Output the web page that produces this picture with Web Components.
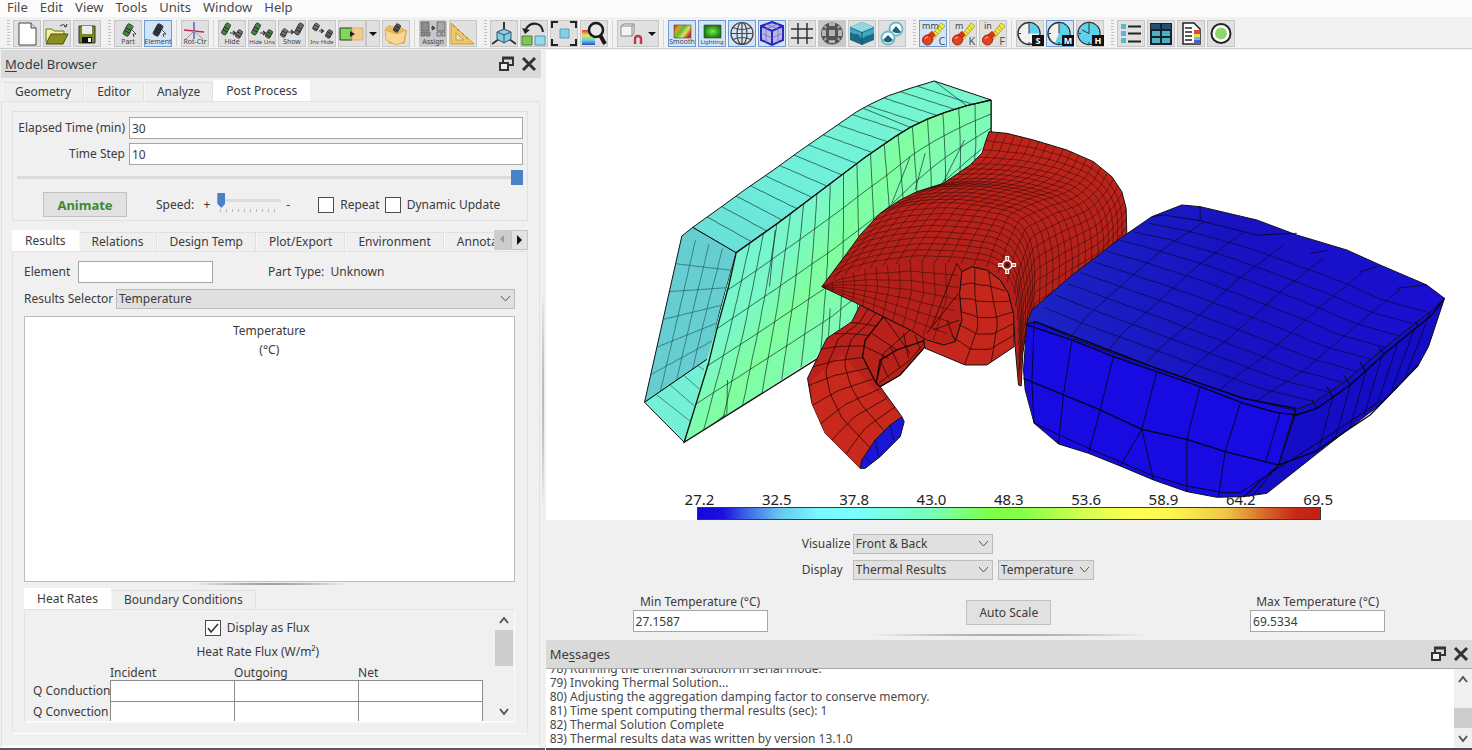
<!DOCTYPE html>
<html lang="en">
<head>
<meta charset="utf-8">
<title>Thermal Model Workbench</title>
<style>
  html, body { margin: 0; height: 100%; }
  body { font: 12px/16px "Noto Sans", "Open Sans", sans-serif; color: #3c3a3c; background: #f0f0f0; overflow: hidden; }
</style>
</head>
<body>
<thermal-app></thermal-app>
<script>
const define = (name, html) => {
  const tpl = document.createElement('template');
  customElements.define(name, class extends HTMLElement {
    connectedCallback() {
      if (this.shadowRoot) return;
      tpl.innerHTML = '<style>*{box-sizing:border-box}</style>' + (typeof html === 'function' ? html(this) : html);
      this.attachShadow({ mode: 'open' }).append(tpl.content.cloneNode(true));
    }
  });
};
const attr = (el, n, d = '') => el.getAttribute(n) ?? d;

/* ---------- toolbar icons, 28 x 27 ---------- */
const part = (x, y, c = '#555', w = 6, h = 12) =>
  `<g transform="translate(${x} ${y}) rotate(28)"><rect x="${-w / 2}" y="${-h / 2}" width="${w}" height="${h}" rx="1.5" fill="${c}" stroke="#333" stroke-width=".8"/><path d="M${-w / 2} -1h${w}M${-w / 2} 2h${w}" stroke="#222" stroke-width=".8"/></g>`;
const arrow = (x, y, l = 5) => `<path d="M${x} ${y}h${l}m-2-2l2.500 2-2.500 2" fill="none" stroke="#333" stroke-width="1.200"/>`;
const thermo = `<path d="M12 16L22 3l4 3-12 14z" fill="#f4ec3c" stroke="#99902a" stroke-width=".7"/><path d="M18 8l3 3M20 6l3 3M16 11l3 3" stroke="#a89c20" stroke-width=".8"/><path d="M8 19l7-6" stroke="#d23a1c" stroke-width="6"/><circle cx="8.500" cy="20" r="5" fill="#e04520" stroke="#9c2410"/><path d="M6 19q1-2 3-2" stroke="#f9b9a0" fill="none"/>`;
const clock = (slice, letter) => `<circle cx="13" cy="13.500" r="11" fill="#f0f2f4" stroke="#333" stroke-width="1.500"/>${slice}<path d="M13 3v10.500M3 13.500h2M13 22v2" stroke="#333"/><rect x="16" y="15" width="12" height="11" fill="#111"/><text x="22" y="24" font-size="9" font-weight="700" text-anchor="middle" fill="#fff">${letter}</text>`;
const ICONS = {
  'new': '<path d="M6 3h12l5 5v17H6z" fill="#fff" stroke="#444"/><path d="M18 3v5h5" fill="#ddd" stroke="#444"/>',
  open: '<path d="M3 22V9h6l2 2h10v4" fill="#f4f0a0" stroke="#6b6b20"/><path d="M3 24l5-10h17l-5 10z" fill="#8a8f22" stroke="#4b4e10"/><path d="M17 6q4-3 6 1m0 0l-2-1m2 1l1-3" fill="none" stroke="#333"/>',
  save: '<path d="M6 6h16v17H6z" fill="#7c8828" stroke="#333"/><path d="M9 6h10v8H9z" fill="#e9ecec"/><path d="M9 17h10v6H9z" fill="#111"/><path d="M15 18h3v4h-3z" fill="#eee"/>',
  part: part(14, 10, '#3f8a3a') + '<path d="M17 9l5 5-3 0 1 3" fill="#fff" stroke="#333" stroke-width=".9"/>',
  element: part(14, 10, '#334') + '<path d="M17 9l5 5-3 0 1 3" fill="#fff" stroke="#333" stroke-width=".9"/>',
  ref: '<path d="M13 2v17" stroke="#5a60c8" stroke-width="1.500"/><path d="M3 10l20 2" stroke="#b83050" stroke-width="1.500"/><path d="M13 11l-8 8M13 11l9 8" stroke="#999"/>',
  hide: part(8, 9, '#3f8a3a', 5, 12) + arrow(12, 13) + part(21, 14, '#777', 5, 8),
  hideuns: part(8, 9, '#3f8a3a', 5, 12) + arrow(12, 13) + part(21, 14, '#3f8a3a', 5, 8),
  show: part(6, 13, '#777', 5, 8) + arrow(10, 12) + part(21, 9, '#666', 5, 12),
  invhide: part(8, 7, '#777', 5, 7) + arrow(11, 11, 4) + part(21, 14, '#666', 5, 8),
  split: '<path d="M2 8h12v12H2z" fill="#7ed957" stroke="#333"/><path d="M14 8h11v12H14z" fill="#f0cc8c" stroke="#d8b070"/><path d="M12 11l5 3-5 3z" fill="#222"/>',
  folder: '<path d="M3 8l4-3 14 3 4 3-2 13-16 0z" fill="#e8b964"/><path d="M3 10l12 4 9-4-2 12-8 3-10-5z" fill="#f6d794" stroke="#d39c42" stroke-width=".7"/>' + part(15, 8, '#555', 5, 8),
  assign: '<g fill="#8c8c8c" stroke="#666" stroke-width=".8"><path d="M2 2h8v9H2zM2 12h4v4H2zM7 12h4v4H7z"/><path d="M18 2h8v9h-8z" fill="#a8a8a8"/><path d="M18 12h4v4h-4zM23 12h3v4h-3z" fill="#b8b8b8"/></g>' + arrow(12, 8, 3),
  triangle: '<path d="M2 3v21h23z" fill="#efc766" stroke="#c99c3a"/><path d="M7 13v7h8z" fill="#e4e4e4" stroke="#c99c3a"/><path d="M4 5l2 2M8 9l2 2M13 13l2 2M17 17l2 2" stroke="#9b7624"/>',
  cube: '<path d="M14 2v8M2 24l7-5M26 24l-7-5" stroke="#333" stroke-width="2"/><path d="M14 9l7 3v7l-7 4-7-4v-7z" fill="#82cfe4" stroke="#37566b"/><path d="M7 12l7 3 7-3M14 15v8" fill="none" stroke="#37566b"/>',
  rotate: '<path d="M5 11Q9 2 17 4q5 1 6 8" fill="none" stroke="#222" stroke-width="2"/><path d="M2 8l3 6 5-4z" fill="#222"/><path d="M2 16h10v9H2z" fill="#7ec850" stroke="#4f7b34"/><path d="M15 16h10v9H15z" fill="#9bd8ee" stroke="#5b93a8"/>',
  fit: '<path d="M2 8V2h6M20 2h6v6M26 19v6h-6M8 25H2v-6" fill="none" stroke="#222" stroke-width="2"/><path d="M10 9h9v9h-9z" fill="#85d0e6" stroke="#5aa0b6"/>',
  zoom: '<defs><linearGradient id="zg" x1="0" y1="0" x2="0" y2="1"><stop offset="0" stop-color="#d84030"/><stop offset=".35" stop-color="#f0e060"/><stop offset=".7" stop-color="#60d0d8"/><stop offset="1" stop-color="#3048c8"/></linearGradient></defs><path d="M2 10h13v15H2z" fill="url(#zg)"/><circle cx="16" cy="10" r="7" fill="#e7e7e7" stroke="#181818" stroke-width="2.500"/><path d="M20 15l5 9" stroke="#181818" stroke-width="4"/>',
  magnet: '<path d="M4 6l3-2h10v9l-2 3H4z" fill="#f4f4f4" stroke="#888"/><path d="M4 6h11v10M15 6l2-2" fill="none" stroke="#888"/><path d="M18 24v-5q0-3 3-3t3 3v5" fill="none" stroke="#c23a4e" stroke-width="2.500"/><path d="M31 12h8l-4 4z" fill="#111"/>',
  smooth: '<defs><linearGradient id="sg" x2="1" y2=".6"><stop stop-color="#d83020"/><stop offset=".3" stop-color="#e0a020"/><stop offset=".5" stop-color="#50c030"/><stop offset=".75" stop-color="#e0e060"/><stop offset="1" stop-color="#d03020"/></linearGradient></defs><path d="M6 5h17v13H6z" fill="url(#sg)" stroke="#444" stroke-width=".6"/>',
  lighting: '<defs><radialGradient id="lg"><stop stop-color="#70f040"/><stop offset="1" stop-color="#1c7c18"/></radialGradient></defs><path d="M6 5h17v13H6z" fill="url(#lg)" stroke="#333" stroke-width=".6"/>',
  globe: '<g fill="none" stroke="#444" stroke-width="1.200"><circle cx="14" cy="13.500" r="11"/><ellipse cx="14" cy="13.500" rx="5" ry="11"/><path d="M14 2v23M3 13.500h22M5 7.500q9 4 18 0M5 19.500q9-4 18 0"/></g>',
  wirecube: '<path d="M14 2l11 4v14l-11 5L3 20V6z" fill="#b9b9e2" stroke="#2b24c4" stroke-width="2"/><path d="M3 6l11 5 11-5M14 11v14" fill="none" stroke="#2b24c4" stroke-width="2"/><path d="M8 8v15M20 8v15M3 13l11 5 11-5M8 4l12 5M20 4L8 9" fill="none" stroke="#6d68c8" stroke-width=".8"/>',
  grid: '<path d="M10 3v21M19 3v21M3 9h22M3 18h22" stroke="#333" stroke-width="1.500"/>',
  ball: '<circle cx="14" cy="13.500" r="11" fill="#555"/><g fill="#b4b4b4"><path d="M11 10h6v6h-6zM11 3h6v3h-6zM11 20h6v3h-6zM4 10h4v6H4zM20 10h4v6h-4zM6 5l3 2-2 2zM22 5l-3 2 2 2zM6 21l3-2-2-2zM22 21l-3-2 2-2z"/></g>',
  box: '<path d="M14 2l12 5v13l-12 5L2 20V7z" fill="#1d6a88"/><path d="M14 2l12 5-12 5L2 7z" fill="#8fd8e0"/><path d="M2 8l12 5 12-5v5l-4 2-4 1-4 3-4-5-4 0-4-2z" fill="#3fa8bd"/><path d="M14 12v13" stroke="#124c66"/>',
  swap: '<circle cx="18" cy="9" r="6.500" fill="#fff" stroke="#69bccb" stroke-width="2"/><path d="M14 11l4-5 5 6q-4 3-9-1z" fill="#245f74"/><circle cx="10" cy="18" r="6.500" fill="#fff" stroke="#69bccb" stroke-width="2"/><path d="M5 20l5-5 5 5q-5 5-10 0z" fill="#245f74"/>',
  c: thermo + '<text x="23" y="25" font-size="11" text-anchor="middle" fill="#555">C</text><text x="3" y="9" font-size="9" fill="#444">mm</text>',
  k: thermo + '<text x="23" y="25" font-size="11" text-anchor="middle" fill="#555">K</text><text x="6" y="9" font-size="9" fill="#444">m</text>',
  f: thermo + '<text x="23" y="25" font-size="11" text-anchor="middle" fill="#555">F</text><text x="5" y="9" font-size="9" fill="#444">in</text>',
  s: clock('<path d="M13 13.500V3a10.500 10.500 0 0 1 10.500 10.500z" fill="#5bd3ea"/>', 'S'),
  m: clock('<path d="M13 13.500V3a10.500 10.500 0 0 1 0 21l-4-1z" fill="#5bd3ea"/>', 'M'),
  h: clock('<circle cx="13" cy="13.500" r="10.500" fill="#5bd3ea"/><path d="M13 13.500L6 10" stroke="#333"/>', 'H'),
  list: '<path d="M4 4h5v5H4zM4 11h5v5H4zM4 18h5v5H4z" fill="#5cb8c8"/><path d="M11 6.500h13M11 13.500h13M11 21.500h13" stroke="#222" stroke-width="2"/>',
  table: '<path d="M4 4h20v20H4z" fill="#4fb0c4" stroke="#16222e" stroke-width="2"/><path d="M4 4h20v5H4z" fill="#1d4e74"/><path d="M14 4v20M4 10h20M4 17h20" stroke="#16222e" stroke-width="2"/>',
  report: '<path d="M6 3h11l6 6v15H6z" fill="#fff" stroke="#222" stroke-width="1.500"/><path d="M8 8h7M8 12h7M8 16h7M8 20h7" stroke="#222" stroke-width="1.500"/><path d="M17 10h6v4h-6z" fill="#d84a38"/><path d="M17 14h6v3h-6z" fill="#f0d850"/><path d="M17 17h6v3h-6z" fill="#5cc8d0"/><path d="M17 20h6v4h-6z" fill="#5458c8"/>',
  record: '<circle cx="14" cy="13.500" r="9.500" fill="#fff" stroke="#222" stroke-width="2"/><circle cx="14" cy="13.500" r="6" fill="#8fd46c"/>',
  drop: '<path d="M3 12h8l-4 4z" fill="#111"/>'
};

define('tool-button', el => {
  const w = +attr(el, 'w', 28), cap = attr(el, 'caption');
  return `<style>
    :host { display: block; flex: none; }
    button { position: relative; display: block; width: ${w}px; height: 27px; padding: 0; border: 1px solid #c6c6c6; background: #e0e0e0; color: #444; font: 7px/10px "Noto Sans", sans-serif; }
    :host([on]) button { background: #d3e4f7; border-color: #6f9bd0; }
    :host([pressed]) button { background: #c8c8c8; border-color: #c8c8c8; }
    :host([joined]) { margin-left: -2px; }
    svg { display: block; margin: -1px; font-family: "Noto Sans", sans-serif; }
    span { position: absolute; left: -4px; right: -4px; bottom: -1px; text-align: center; white-space: nowrap; }
    span.long { font-size: 6px; }
  </style><button type="button" title="${attr(el, 'name')}" aria-label="${attr(el, 'name')}"><svg width="${w}" height="27" viewBox="0 0 ${w} 27">${ICONS[attr(el, 'icon')]}</svg>${cap ? `<span class="${cap.length > 7 ? 'long' : ''}">${cap}</span>` : ''}</button>`;
});

define('tool-sep', `<style>
  :host { display: block; flex: none; width: 5px; height: 27px; }
  :host::before { content: ""; display: block; width: 1px; height: 27px; margin-left: 2px; background: #d6d6d6; }
  :host([grip]) { width: 9px; }
  :host([grip])::before { width: 3px; margin-left: 5px; background: repeating-linear-gradient(#c2c2c2 0 1px, transparent 1px 3px); }
</style>`);

define('tool-bar', () => {
  const b = (icon, name, extra = '') => `<tool-button icon="${icon}" name="${name}" ${extra}></tool-button>`;
  const sep = '<tool-sep></tool-sep>', grip = '<tool-sep grip></tool-sep>';
  return `<style>
    :host { display: flex; gap: 2px; height: 32px; padding: 3px 2px 1px; background: #f2f2f2; border-bottom: 1px solid #cfcfcf; }
  </style>` +
  grip + b('new', 'New') + b('open', 'Open') + b('save', 'Save') + grip +
  b('part', 'Select part', 'caption="Part"') + b('element', 'Select element', 'caption="Element" on') + sep +
  b('ref', 'Rotation center', 'caption="Rot-Ctr"') + sep +
  b('hide', 'Hide', 'caption="Hide"') + b('hideuns', 'Hide unselected', 'caption="Hide Uns"') + b('show', 'Show', 'caption="Show"') +
  b('invhide', 'Invert hide', 'caption="Inv Hide"') + b('split', 'Split view') + b('drop', 'Split view options', 'w="14" joined') + b('folder', 'Part folder') + sep +
  b('assign', 'Assign', 'caption="Assign" pressed') + b('triangle', 'Measure') + grip +
  b('cube', 'Axes view') + b('rotate', 'Rotate') + b('fit', 'Fit') + b('zoom', 'Zoom') + sep + b('magnet', 'Snap', 'w="42"') + sep +
  b('smooth', 'Smooth', 'caption="Smooth" on') + b('lighting', 'Lighting', 'caption="Lighting" on') + b('globe', 'Globe', 'on') + b('wirecube', 'Mesh edges', 'on') +
  b('grid', 'Grid') + b('ball', 'Environment', 'pressed') + b('box', 'Ground') + b('swap', 'Swap') + grip +
  b('c', 'Millimetres, Celsius', 'on') + b('k', 'Metres, Kelvin') + b('f', 'Inches, Fahrenheit') + sep +
  b('s', 'Seconds') + b('m', 'Minutes', 'on') + b('h', 'Hours') + grip +
  b('list', 'List') + b('table', 'Table') + b('report', 'Report') + b('record', 'Record');
});

define('menu-bar', `<style>
  :host { display: block; background: #fcfcfc; }
  nav { display: flex; height: 17px; padding-left: 1px; }
  button { border: 0; background: none; padding: 0 6px; font: 13px/14px "Noto Sans", sans-serif; color: #4a484a; height: 14px; }
</style><nav aria-label="Main menu">${['File', 'Edit', 'View', 'Tools', 'Units', 'Window', 'Help'].map(t => `<button type="button">${t}</button>`).join('')}</nav>`);

define('dock-panel', `<style>
  :host { display: flex; flex-direction: column; min-height: 0; min-width: 0; }
  header { display: flex; align-items: center; height: 28px; padding: 0 0 0 4px; background: #dadada; flex: none; }
  h2 { flex: 1; margin: 0; font: 13px/18px "Noto Sans", sans-serif; }
  button { display: block; width: 23px; height: 18px; padding: 0; border: 0; background: none; }
  svg { display: block; margin: 0 auto; }
</style><header><h2><slot name="title"></slot></h2>
<button type="button" aria-label="Float"><svg width="16" height="16" viewBox="0 0 16 16"><path d="M5 2h10v7h-4M5 2v4" fill="none" stroke="#333" stroke-width="2"/><path d="M4 2h12" stroke="#333" stroke-width="3"/><path d="M2 7h8v7H2z" fill="#eee" stroke="#333" stroke-width="2"/></svg></button>
<button type="button" aria-label="Close"><svg width="16" height="16" viewBox="0 0 16 16"><path d="M2 2l12 12M14 2L2 14" stroke="#333" stroke-width="3"/></svg></button>
</header><slot></slot>`);

define('tab-strip', el => `<style>
  :host { display: flex; align-items: flex-end; height: 21px; overflow: hidden; flex: none; }
  div { display: flex; align-items: flex-end; flex: 1; min-width: 0; overflow: hidden; }
  button { flex: none; height: 19px; padding: 0 var(--pad, 12px); border: 1px solid #e0e0e0; border-left-color: #f8f8f8; border-bottom: 0; background: #efefef; font: inherit; color: inherit; white-space: nowrap; }
  button[aria-selected=true] { height: 21px; background: #fff; border-color: #fff; }
  .nav button { width: 17px; height: 20px; padding: 0; border: 1px solid #c4c4c4; background: #e2e2e2; }
  .nav { flex: none; align-self: flex-start; }
  .nav button:first-child { background: #cdcdcd; border-color: #cdcdcd; }
  .nav svg { display: block; margin: 0 auto; }
</style><div role="tablist">${attr(el, 'tabs').split('|').map((t, i) => `<button type="button" role="tab" aria-selected="${i === +attr(el, 'active', 0)}">${t}</button>`).join('')}</div>
${el.hasAttribute('scroll') ? `<div class="nav"><button type="button" aria-label="Previous tabs"><svg width="10" height="10"><path d="M7 0v8L3 4z" fill="#999"/></svg></button><button type="button" aria-label="Next tabs"><svg width="10" height="12"><path d="M3 1v10l5-5z" fill="#111"/></svg></button></div>` : ''}`);

define('text-field', el => `<style>
  :host { display: flex; align-items: center; }
  :host([stacked]) { flex-direction: column; align-items: center; }
  label { flex: none; width: var(--label, auto); text-align: var(--align, right); padding-right: 4px; white-space: nowrap; }
  :host([stacked]) label { padding: 0; text-align: center; }
  input { width: var(--field, auto); flex: var(--grow, 1); min-width: 0; height: 22px; padding: 0 2px; border: 1px solid #a6a6a6; border-radius: 0; background: #fff; font: inherit; color: inherit; }
  :host([stacked]) input { flex: none; }
</style><label for="f">${attr(el, 'label')}</label><input id="f" type="text" value="${attr(el, 'value')}">`);

define('combo-box', el => `<style>
  :host { display: flex; align-items: center; }
  label { flex: none; width: var(--label, auto); white-space: nowrap; }
  .box { position: relative; flex: var(--grow, 1); width: var(--field, auto); }
  select { display: block; width: 100%; height: 20px; padding: 0 16px 0 2px; appearance: none; border: 1px solid #bcbcbc; border-radius: 0; background: #e0e0e0; font: inherit; color: inherit; }
  svg { position: absolute; right: 4px; top: 6px; pointer-events: none; }
</style>${attr(el, 'label') ? `<label for="s">${attr(el, 'label')}</label>` : ''}<div class="box"><select id="s" aria-label="${attr(el, 'label', 'Display quantity')}"><option>${attr(el, 'value')}</option></select><svg width="11" height="8" viewBox="0 0 11 8"><path d="M1 1l4.500 5 4.500-5" fill="none" stroke="#555"/></svg></div>`);

define('check-box', el => `<style>
  :host { display: block; }
  label { display: flex; align-items: center; gap: 6px; white-space: nowrap; }
  input { appearance: none; flex: none; width: 16px; height: 16px; margin: 0; border: 1px solid #4c4c4c; background: #fff; }
  .b { position: relative; display: block; height: 16px; }
  svg { position: absolute; left: 2px; top: 2px; pointer-events: none; display: none; }
  input:checked + svg { display: block; }
</style><label><span class="b"><input type="checkbox" ${el.hasAttribute('checked') ? 'checked' : ''}><svg width="12" height="12"><path d="M1 6l3 4 7-8" fill="none" stroke="#333" stroke-width="1.500"/></svg></span>${attr(el, 'label')}</label>`);

define('range-slider', el => `<style>
  :host { display: block; }
  input { appearance: none; display: block; width: 100%; height: 17px; margin: 0; background: linear-gradient(#dcdcdc, #dcdcdc) center / 100% 3px no-repeat; }
  input::-webkit-slider-thumb { appearance: none; width: 12px; height: 15px; background: #4a82c8; border: 0; border-radius: 0; }
  :host([pointed]) input::-webkit-slider-thumb { width: 8px; height: 15px; clip-path: polygon(0 0, 100% 0, 100% 72%, 50% 100%, 0 72%); }
  :host([pointed])::after { content: ""; display: block; height: 3px; margin: 0 3px; background: repeating-linear-gradient(90deg, #b8b8b8 0 1px, transparent 1px 6px); }
</style><input type="range" aria-label="${attr(el, 'label')}" min="0" max="100" value="${attr(el, 'value')}">`);

define('scroll-rail', `<style>
  :host { display: flex; flex-direction: column; justify-content: space-between; width: 18px; flex: none; background: #f0f0f0; }
  button { width: 18px; height: 20px; padding: 0; border: 0; background: none; flex: none; }
  svg { display: block; margin: 0 auto; }
  i { flex: none; height: var(--thumb); background: #cdcdcd; }
  .a { flex: var(--before, 0); } .z { flex: var(--after, 1); }
</style><button type="button" aria-label="Scroll up"><svg width="12" height="9"><path d="M2 7l4-5 4 5" fill="none" stroke="#555" stroke-width="2"/></svg></button><span class="a"></span><i></i><span class="z"></span><button type="button" aria-label="Scroll down"><svg width="12" height="9"><path d="M2 2l4 5 4-5" fill="none" stroke="#555" stroke-width="2"/></svg></button>`);

define('time-controls', `<style>
  :host { display: block; padding: 5px 4px 3px; border: 1px solid #e0e0e0; }
  text-field { --label: 112px; margin-bottom: 4px; }
  .track { margin: 2px 0 6px; }
  .row { display: flex; align-items: center; height: 25px; padding-left: 26px; white-space: nowrap; }
  button { width: 84px; height: 25px; margin-right: 29px; border: 1px solid #c0c0c0; background: #e1e1e1; color: #3c8a30; font: bold 13px/16px "Noto Sans", sans-serif; }
  .speed { width: 64px; margin: 0 5px 0 7px; align-self: flex-start; }
  .repeat { margin: 0 5px 0 28px; }
</style>
<text-field label="Elapsed Time (min)" value="30"></text-field>
<text-field label="Time Step" value="10"></text-field>
<range-slider class="track" label="Time" value="100"></range-slider>
<div class="row"><button type="button">Animate</button><span>Speed:&nbsp;&nbsp; +</span><range-slider pointed class="speed" label="Speed" value="0"></range-slider><span>-</span>
<check-box class="repeat" label="Repeat"></check-box><check-box label="Dynamic Update"></check-box></div>`);

define('heat-rates', `<style>
  :host { display: flex; height: 114px; padding-right: 1px; border: 1px solid #e2e2e2; border-bottom: 2px solid #fbfbfb; border-right-color: #fbfbfb; flex: none; }
  .view { flex: 1; overflow: hidden; padding: 10px 12px 0 8px; }
  check-box { width: 106px; margin: 0 auto; }
  table { width: 100%; border-collapse: collapse; table-layout: fixed; }
  caption { box-sizing: content-box; height: 16px; line-height: 16px; padding: 8px 0 6px; }
  th { font-weight: normal; text-align: left; padding: 0; white-space: nowrap; line-height: 14px; }
  thead th { height: 14px; }
  col:first-child { width: 77px; }
  td { padding: 0; height: 21px; border: 1px solid #8c8c8c; background: #fff; }
  input { display: block; width: 100%; height: 20px; border: 0; padding: 0 3px; font: inherit; background: #fff; }
</style><div class="view"><check-box label="Display as Flux" checked></check-box>
<table><caption>Heat Rate Flux (W/m²)</caption><colgroup><col><col><col><col></colgroup>
<thead><tr><th></th><th scope="col">Incident</th><th scope="col">Outgoing</th><th scope="col">Net</th></tr></thead>
<tbody>${['Q Conduction', 'Q Convection'].map(r => `<tr><th scope="row">${r}</th>${['Incident', 'Outgoing', 'Net'].map(c => `<td><input aria-label="${r} ${c}"></td>`).join('')}</tr>`).join('')}</tbody></table></div>
<scroll-rail style="--thumb:36px"></scroll-rail>`);

define('model-browser', `<style>
  :host { display: block; height: 100%; min-height: 0; }
  dock-panel { height: 100%; }
  u { text-decoration-thickness: 1px; text-underline-offset: 2px; }
  .top { margin: 2px 0 0 1px; --pad: 12px; }
  .page { flex: 1; min-height: 0; display: flex; flex-direction: column; margin: 0 1px 0 0; padding: 9px 11px 11px 10px; border: 1px solid #e2e2e2; border-bottom: 3px solid #fafafa; }
  .sub { margin-top: 9px; }
  .results { flex: 1; min-height: 0; display: flex; flex-direction: column; padding: 9px 12px 10px 11px; border: 1px solid #e4e4e4; border-bottom-color: #fff; }
  .line { display: flex; align-items: center; gap: 55px; margin-bottom: 6px; }
  .el { --label: 54px; --align: left; --field: 135px; --grow: none; }
  .sel { --label: 92px; }
  .plot { flex: 1; min-height: 40px; margin-top: 7px; padding-top: 4px; border: 1px solid #bcbcbc; background: #fff; text-align: center; line-height: 19px; }
  .grab { height: 6px; padding-top: 1px; flex: none; }
  .grab::before { content: ""; display: block; width: 36%; height: 2px; margin: 0 auto; background: radial-gradient(closest-side, #555, transparent); }
</style>
<dock-panel><span slot="title"><u>M</u>odel Browser</span>
<tab-strip class="top" tabs="Geometry|Editor|Analyze|Post Process" active="3"></tab-strip>
<section class="page"><time-controls></time-controls>
<tab-strip class="sub" tabs="Results|Relations|Design Temp|Plot/Export|Environment|Annotations" active="0" scroll></tab-strip>
<div class="results"><div class="line"><text-field class="el" label="Element"></text-field><span>Part Type:&nbsp; Unknown</span></div>
<combo-box class="sel" label="Results Selector" value="Temperature"></combo-box>
<div class="plot">Temperature<br>(°C)</div><div class="grab"></div>
<tab-strip tabs="Heat Rates|Boundary Conditions" active="0"></tab-strip><heat-rates></heat-rates></div></section></dock-panel>`);

/* ---------- mesh geometry ---------- */
const along = pts => {
  const d = [0];
  for (let i = 1; i < pts.length; i++) d.push(d[i - 1] + Math.hypot(pts[i][0] - pts[i - 1][0], pts[i][1] - pts[i - 1][1]));
  return t => {
    const s = t * d[d.length - 1];
    let i = 1;
    while (i < pts.length - 1 && d[i] < s) i++;
    const k = (s - d[i - 1]) / (d[i] - d[i - 1]);
    return [0, 1].map(a => pts[i - 1][a] + (pts[i][a] - pts[i - 1][a]) * k);
  };
};
const P = s => s.trim().split(/\s+/).map(p => p.split(',').map(Number));
/* Coons patch: c0/c1 run in u, d0/d1 run in v */
const patch = (c0, c1, d0, d1, nu, nv) => {
  [c0, c1, d0, d1] = [c0, c1, d0, d1].map(c => along(P(c)));
  const S = (u, v) => [0, 1].map(a => (1 - v) * c0(u)[a] + v * c1(u)[a] + (1 - u) * d0(v)[a] + u * d1(v)[a]
    - ((1 - u) * (1 - v) * c0(0)[a] + u * (1 - v) * c0(1)[a] + (1 - u) * v * c1(0)[a] + u * v * c1(1)[a]));
  const n = 24, out = [];
  const line = f => 'M' + Array.from({ length: n + 1 }, (_, i) => f(i / n).map(Math.round).join(' ')).join('L');
  for (let i = 1; i < nu; i++) out.push(line(t => S(i / nu, t)));
  for (let j = 1; j < nv; j++) out.push(line(t => S(t, j / nv)));
  return out.join('');
};
const poly = (pts, fill, w = 3) => `<polygon points="${pts}" fill="${fill}" stroke="#111" stroke-width="${w}" stroke-linejoin="round"/>`;
const mesh = (d, c = '#0c2a24', w = 2) => `<path d="${d}" fill="none" stroke="${c}" stroke-width="${w}"/>`;

const ductOuter = '188,472 270,413 350,355 430,300 510,242 600,180 680,125 720,103 775,77 840,55 912,33';
const ductEdge = '318,548 445,458 575,360 705,262 795,200 840,172 890,148 945,127 1010,107 1083,90';
const ductEdgeR = ductEdge.split(' ').reverse().join(' ');
const ductFront = ductEdge + ' 1083,190 900,500 700,740 660,755 595,800 560,862 162,1117';
const duct = `<g transform="translate(84 20) scale(.3333)">` +
  poly('155,498 188,472 318,548 270,720 235,865 43,997', '#66cdd0') +
  mesh(patch('188,472 235,500 318,548', '43,997 140,930 235,865', '155,498 100,750 43,997', '318,548 270,720 235,865', 4, 6), '#1d5a60') +
  poly('43,997 235,865 220,930 162,1117', '#74f0d6') +
  mesh('M80 975L188 1060M120 945L195 1010M160 915L210 960M200 885L222 900', '#1d5a60') +
  `<polygon points="${ductFront}" fill="url(#gd)"/>` +
  `<clipPath id="cf"><polygon points="${ductFront}"/></clipPath><g clip-path="url(#cf)">` +
  mesh(patch(ductEdge, '162,1117 595,845 790,690 930,480 1070,300', '318,548 290,660 240,850 162,1117', '1083,90 1083,190 1070,300', 18, 5)) +
  mesh('M435 480L418 650M1003 210L935 345M885 250L855 360M840 260L785 400M600 715L595 800M292 930L290 1030L240 1070') + '</g>' +
  poly(ductOuter + ' 1083,90 ' + ductEdgeR, 'url(#gt)') +
  mesh(patch(ductOuter, ductEdge, '188,472 318,548', '912,33 1083,90', 16, 1)) +
  mesh('M700 115L840 172M912 33L1010 107') +
  mesh('M' + ductEdge.split(' ').join('L') + 'M318 548L295 650L262 770L235 880L162 1117L595 845M1083 90V190', '#111', 4) + '</g>';

const body = '567,35 620,40 700,60 800,90 880,125 935,170 965,215 978,265 980,345 900,450 700,585 680,620 668,700 663,798 655,795 645,680 640,580 625,520 600,480 560,450 515,440 485,455 478,520 485,600 465,665 430,675 380,660 330,630 180,555 65,500 140,400 180,345 240,280 300,240 350,215 430,190 510,135 545,100 558,60';
const ring = '65,500 120,468 200,445 330,425 470,430 560,440 610,470 640,520 652,620 655,795';
const red = `<g transform="translate(254 70) scale(.3333)">` +
  poly('180,555 155,605 80,655 22,775 35,850 75,940 180,1045 225,960 305,890 240,800 300,765 375,680 385,660 330,630', '#b9221b') +
  `<polygon points="35,780 125,705 215,800 305,890 225,960 180,1045 75,940 35,850" fill="#c9281c"/>` +
  mesh(patch('180,555 155,605 80,655 22,775 35,850 75,940 180,1045', '250,590 195,660 187,710 225,790 305,890', '180,555 250,590', '180,1045 225,960 305,890', 10, 3), '#2a0806', 2.5) +
  mesh('M330 630L250 700L228 790M250 590L330 700M215 640L290 690M195 680L265 715M375 665L330 720L235 790M345 645L360 690M310 640L325 715M270 680L300 745M240 720L265 775', '#2a0806', 2.5) +
  mesh('M375 680L300 765L240 800L228 790M380 660L290 690L240 720L228 790M250 590L195 660L187 710L228 790', '#160403', 4) +
  poly('180,1045 185,1020 225,960 270,915 305,890 312,905 300,950 240,1010 195,1045', '#1a16d8') +
  mesh('M225 960L235 1010M270 915L280 960M195 1010L210 1030', '#05052c') +
  poly('485,455 515,440 560,450 600,480 625,520 640,580 642,680 560,735 495,735 375,685 370,655 465,665 485,600 478,520', '#c6271c') +
  `<clipPath id="cb"><polygon points="${body}"/></clipPath>` + poly(body, 'url(#gr)') + '<g clip-path="url(#cb)">' +
  '<g opacity=".75">' + mesh(patch(ring, '567,35 700,60 800,90 880,125 935,170 965,215 978,265 980,345', '65,500 140,400 240,280 350,215 430,190 510,135 545,100 567,35', '655,795 668,700 700,585 900,450 980,345', 23, 25), '#2a0806') +
  mesh(patch('65,500 120,468 200,445 330,425 470,430', '65,500 180,555 330,630 430,675', '65,500 66,501', '470,430 475,540 430,675', 12, 7), '#2a0806') + '</g>' +
  mesh('M470 430L395 620M470 430L485 455M475 520L380 640M478 600L400 630M440 600L465 665', '#2a0806', 2.5) + '</g>' +
  mesh(patch('485,455 515,440 560,450 600,480', '430,680 495,735 560,735 642,680', '485,455 478,520 485,600 430,680', '600,480 640,580 642,680', 3, 6), '#2a0806', 2.5) +
  '</g>';

const blueTop = '515,45 570,50 740,90 860,135 1010,180 1110,225 1250,285 1303,325 1265,360 1120,475 1010,570 915,635 855,660 700,625 440,535 310,490 190,445 75,395 50,400 65,360 180,260 330,145 425,80';
const blueFront = '50,400 75,395 190,445 310,490 440,535 700,625 855,660 805,825 700,920 620,922 530,905 430,870 330,828 235,790 145,762 72,700 45,600 40,540';
const blueSide = '855,660 915,635 1010,570 1120,475 1265,360 1303,325 1255,470 1225,525 1115,640 960,760 770,910 700,920 805,825';
const blue = `<g transform="translate(464 140) scale(.3333)">` +
  poly(blueFront, '#180be2') + poly(blueSide, '#150cc6') + poly(blueTop, 'url(#gb)') +
  '<g opacity=".8">' + mesh(patch('460,75 570,92 740,135 900,190 1050,245 1160,295 1290,330', '75,395 190,445 440,535 700,625 855,660', '460,75 330,150 180,275 110,340 75,395', '1290,330 1120,475 1010,570 855,660', 7, 10), '#06062e', 2.5) + '</g>' +
  mesh('M425 80L460 75L570 92L740 135L860 130M900 190L950 182M1050 245L1100 230M1160 295L1250 285M570 50V92', '#06062e', 2.5) +
  mesh('M50 405L190 452L310 500L440 545L570 590L700 640L800 668L860 675L920 655L1020 585L1130 485L1265 375L1303 325M75 395L440 535L700 625L855 655', '#030318', 4) +
  mesh('M40 565L160 615L270 660L395 718L530 748L645 785L805 825L915 785L1080 675L1225 525', '#030318', 4) +
  mesh('M72 395L65 575L72 700M185 452L160 615L145 762M310 498L270 660L235 790M440 545L395 718L330 828M395 718L430 870M570 590L530 748L530 905M692 635L645 785L625 920M810 668L765 820M855 675L805 825L700 920M805 825L730 915', '#05052c', 3) +
  mesh('M72 700L235 775L430 858L530 888L640 908L690 908L780 850L960 735L1115 630', '#05052c', 3) +
  mesh(patch('915,655 1020,585 1130,485 1225,405 1303,325', '880,800 1000,730 1130,615 1225,525', '915,655 880,800', '1303,325 1225,525', 8, 1), '#05052c', 2.5) +
  mesh('M850 650L860 675M905 630L920 655M950 590L970 625M1000 555L1020 585M1050 515L1065 545M1105 470L1125 495M1215 395L1225 412', '#030318', 3) + '</g>';

define('mesh-view', `<style>
  :host { display: block; }
  svg { display: block; width: 100%; height: 100%; }
</style><svg viewBox="0 0 926 470" preserveAspectRatio="xMidYMax meet" role="img" aria-label="Thermal mesh model"><defs>
<linearGradient id="gd" gradientUnits="userSpaceOnUse" x1="330" y1="465" x2="760" y2="765"><stop offset="0" stop-color="#72f4d4"/><stop offset=".3" stop-color="#7af8c8"/><stop offset=".52" stop-color="#80ff9e"/><stop offset=".7" stop-color="#80fcb0"/><stop offset="1" stop-color="#7cfac0"/></linearGradient>
<linearGradient id="gt" x1="0" y1="1" x2="1" y2="0"><stop offset="0" stop-color="#68dcd8"/><stop offset=".4" stop-color="#70f0da"/><stop offset="1" stop-color="#78f8cc"/></linearGradient>
<linearGradient id="gr" x1="0" y1="0" x2="0" y2="1"><stop offset="0" stop-color="#c0241b"/><stop offset=".5" stop-color="#b4211a"/><stop offset="1" stop-color="#b8221b"/></linearGradient>
<linearGradient id="gb" x1="0" y1=".5" x2="1" y2=".5"><stop offset="0" stop-color="#1c24c2"/><stop offset=".5" stop-color="#1812c2"/><stop offset="1" stop-color="#1a0fd2"/></linearGradient></defs>
${duct}${red}${blue}
<g transform="translate(461 215)"><path d="M0-9V-3M0 3V9M-9 0h6M3 0h6" stroke="#fff" stroke-width="4"/><path d="M0-8V-3M0 3V8M-8 0h5M3 0h5" stroke="#7a1a14" stroke-width="1"/><circle r="4.500" fill="#a01c14" stroke="#fff" stroke-width="1.500"/><circle r="2" fill="#301010"/></g></svg>`);

define('color-legend', `<style>
  :host { display: block; width: 70%; }
  div { display: flex; justify-content: space-between; font: 15px/16px "Noto Sans", sans-serif; color: #222; }
  i { display: block; height: 13px; margin: 0 12px; border: 1px solid #3a3a3a; background: linear-gradient(90deg, #1507dc 0, #1a10de 4%, #3d68e6 8%, #68c4f0 13%, #78f6ff 19%, #78ffff 25%, #78ffb4 38%, #80ff48 47%, #84ff48 52%, #d4ff50 62%, #ffff50 70%, #fbf850 76%, #efc548 85%, #d86a2c 91%, #c82818 96%, #c02014 100%); }
</style><div>${['27.2', '32.5', '37.8', '43.0', '48.3', '53.6', '58.9', '64.2', '69.5'].map(t => `<span>${t}</span>`).join('')}</div><i></i>`);

define('result-viewport', `<style>
  :host { display: grid; min-height: 0; background: #fff; }
  color-legend { grid-area: 1 / 1; align-self: end; justify-self: center; z-index: 0; }
  mesh-view { grid-area: 1 / 1; min-height: 0; overflow: hidden; z-index: 1; }
</style><color-legend></color-legend><mesh-view></mesh-view>`);

define('view-controls', `<style>
  :host { display: block; padding-top: 14px; }
  .sel { display: grid; grid-template-columns: auto 96px; justify-content: center; gap: 6px 5px; margin-right: 122px; }
  combo-box { --label: 51px; --field: 140px; --grow: none; }
  .q { grid-column: 2; --field: 96px; }
  .rng { display: grid; grid-template-columns: repeat(3, 1fr); justify-items: center; align-items: start; padding-top: 14px; }
  text-field { --field: 135px; }
  button { width: 85px; height: 25px; margin-top: 6px; border: 1px solid #c0c0c0; background: #e1e1e1; font: inherit; color: inherit; }
  .grab { width: 34%; height: 2px; margin: 2px auto 4px; background: radial-gradient(closest-side, #666, transparent); }
</style>
<div class="sel"><combo-box label="Visualize" value="Front &amp; Back"></combo-box><span></span><combo-box label="Display" value="Thermal Results"></combo-box><combo-box class="q" value="Temperature"></combo-box></div>
<div class="rng"><text-field stacked label="Min Temperature (°C)" value="27.1587"></text-field><button type="button">Auto Scale</button><text-field stacked label="Max Temperature (°C)" value="69.5334"></text-field></div>
<div class="grab"></div>`);

define('message-log', `<style>
  :host { display: flex; height: 82px; border-top: 1px solid #a8a8a8; border-bottom: 2px solid #4b4b50; background: #fff; flex: none; }
  ol { flex: 1; margin: 0; padding: 0 4px 2px; list-style: none; display: flex; flex-direction: column; justify-content: flex-end; overflow: hidden; line-height: 14px; color: #4a484a; }
  scroll-rail { --thumb: 20px; --before: 1; --after: 0; }
</style><ol>${['78) Running the thermal solution in serial mode.', '79) Invoking Thermal Solution...', '80) Adjusting the aggregation damping factor to conserve memory.', '81) Time spent computing thermal results (sec): 1', '82) Thermal Solution Complete', '83) Thermal results data was written by version 13.1.0'].map(t => `<li>${t}</li>`).join('')}</ol><scroll-rail></scroll-rail>`);

define('thermal-app', `<style>
  :host { display: flex; flex-direction: column; height: 100vh; }
  main { flex: 1; min-height: 0; display: grid; grid-template-columns: minmax(0, 37fr) minmax(0, 63fr); margin-top: 1px; }
  .left { position: relative; min-height: 0; padding: 0 4px 0 1px; border-bottom: 2px solid #5a5a5c; }
  .left::after { content: ""; position: absolute; right: 1px; top: 32%; height: 36%; width: 2px; background: radial-gradient(closest-side, #888, transparent); }
  .right { display: flex; flex-direction: column; min-height: 0; padding-left: 1px; }
  result-viewport { flex: 1; }
  u { text-decoration-thickness: 1px; text-underline-offset: 2px; }
</style><menu-bar></menu-bar><tool-bar></tool-bar>
<main><div class="left"><model-browser></model-browser></div>
<div class="right"><result-viewport></result-viewport><view-controls></view-controls>
<dock-panel><span slot="title">Me<u>s</u>sages</span><message-log></message-log></dock-panel></div></main>`);
</script>
</body>
</html>
